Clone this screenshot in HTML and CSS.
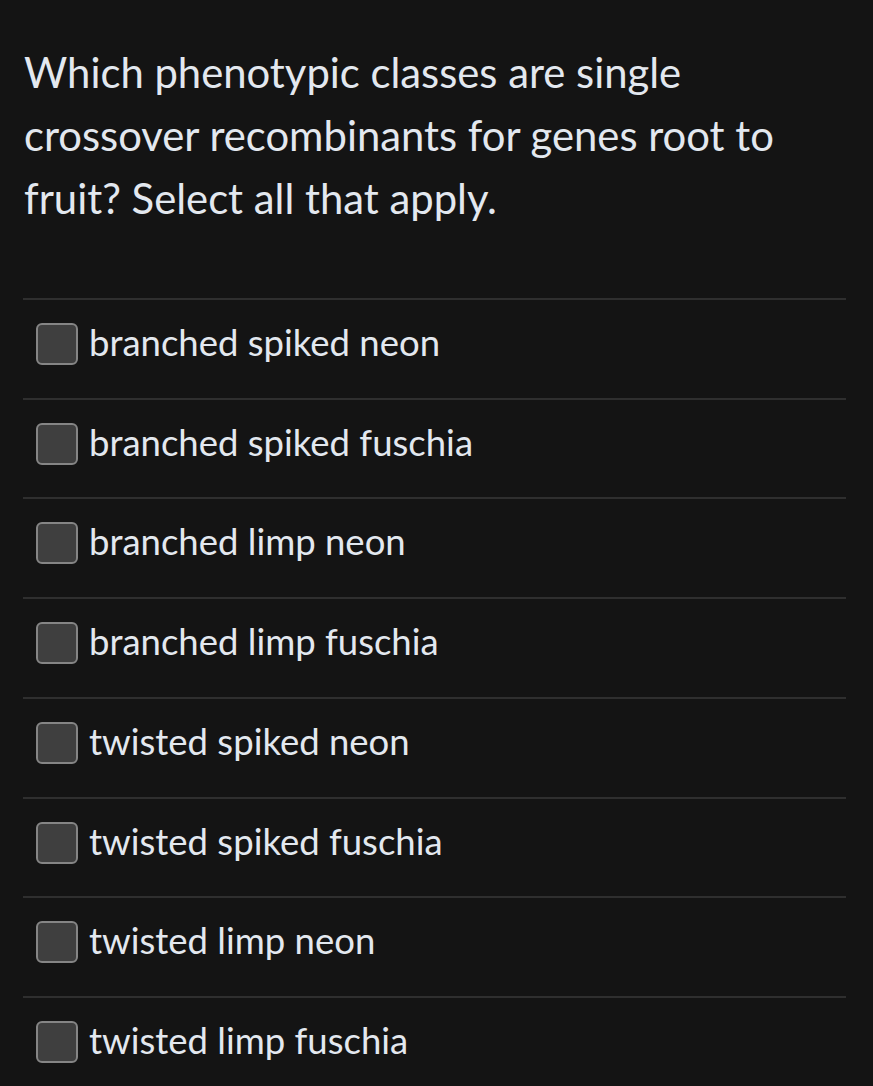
FILE: index.html
```html
<!DOCTYPE html>
<html lang="en">
<head>
<meta charset="utf-8">
<title>Question</title>
<link rel="stylesheet" href="styles.css">
</head>
<body>
<main class="question">
  <p class="prompt">Which phenotypic classes are single crossover recombinants for genes root to fruit? Select all that apply.</p>
  <ul class="options">
    <li class="option"><span class="box"></span><span class="label">branched spiked neon</span></li>
    <li class="option"><span class="box"></span><span class="label">branched spiked fuschia</span></li>
    <li class="option"><span class="box"></span><span class="label">branched limp neon</span></li>
    <li class="option"><span class="box"></span><span class="label">branched limp fuschia</span></li>
    <li class="option"><span class="box"></span><span class="label">twisted spiked neon</span></li>
    <li class="option"><span class="box"></span><span class="label">twisted spiked fuschia</span></li>
    <li class="option"><span class="box"></span><span class="label">twisted limp neon</span></li>
    <li class="option"><span class="box"></span><span class="label">twisted limp fuschia</span></li>
  </ul>
</main>
</body>
</html>
```
FILE: styles.css
```css
html, body {
  margin: 0;
  padding: 0;
  background: #141414;
}
body {
  font-family: Lato, "Open Sans", sans-serif;
  color: #e3e8ef;
  overflow: hidden;
}
.question {
  padding: 41px 27px 0 23px;
}
.prompt {
  margin: 0 0 68px 1px;
  font-size: 41.8px;
  line-height: 63px;
  max-width: 800px;
}
.options {
  list-style: none;
  margin: 0;
  padding: 0;
}
.option {
  box-sizing: border-box;
  height: 99.71px;
  border-top: 2px solid #2f2f2f;
  display: flex;
  align-items: center;
  padding: 23px 0 0 13px;
}
.box {
  box-sizing: border-box;
  width: 42px;
  height: 42px;
  border: 2.5px solid #858585;
  border-radius: 6px;
  background: #3f3f3f;
  flex: none;
  align-self: flex-start;
}
.label {
  margin-left: 11px;
  font-size: 36.5px;
  line-height: 42px;
  align-self: flex-start;
  margin-top: -2px;
}
```
